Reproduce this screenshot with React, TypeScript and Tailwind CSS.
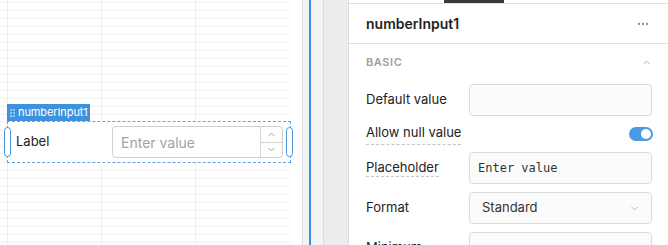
import { ChevronUp, ChevronDown, Ellipsis } from 'lucide-react';

const FONT = "font-['Inter','Noto_Sans',sans-serif]";

const DragDots = () => (
  <svg width="5" height="8" viewBox="0 0 5 8" className="shrink-0">
    {[1, 4, 7].map(y => [1, 4].map(x => <rect key={`${x}-${y}`} x={x - 0.75} y={y - 0.75} width="1.5" height="1.5" fill="white" opacity="0.85" />))}
  </svg>
);

const Handle = () => (
  <div className="w-[7px] h-[30px] rounded-full bg-white border border-[#4a97e0]" />
);

const Canvas = () => (
  <div className="relative w-[290px] h-full bg-[repeating-linear-gradient(180deg,#ffffff_0px,#ffffff_1px,#f6f6f6_1px,#f6f6f6_3px,#ffffff_3px,#ffffff_8px)]">
    <div className="flex h-full pl-[7px]">
      {[0, 1, 2].map(i => <div key={i} className="w-[94px] h-full border-l border-[#eeeeee]" />)}
    </div>
    {/* selected widget */}
    <div className="absolute left-[7px] top-[104px] w-[284px]">
      <div className="flex items-center gap-[3px] w-[83px] h-[17px] pl-[3px] bg-[#3f91dd] text-white text-[11px] leading-none">
        <DragDots />
        <span className="tracking-[-0.1px]">numberInput1</span>
      </div>
      <div className="relative h-[42px] bg-white border border-dashed border-[#5fa3e4] flex items-center">
        <div className="absolute -left-[4px] top-[5px]"><Handle /></div>
        <div className="absolute -right-[3px] top-[5px]"><Handle /></div>
        <span className="ml-[8px] w-[96px] text-[13px] text-[#222]">Label</span>
        <div className="flex h-[32px] w-[171px] rounded-[4px] border border-[#cfcfcf] bg-white overflow-hidden">
          <div className="flex-1 flex items-center pl-[8px] text-[14px] text-[#a3a3a3]">Enter value</div>
          <div className="w-[22px] border-l border-[#d6d6d6] flex flex-col">
            <div className="flex-1 flex items-center justify-center border-b border-[#d6d6d6]">
              <ChevronUp size={11} strokeWidth={1.75} color="#8a8a8a" />
            </div>
            <div className="flex-1 flex items-center justify-center">
              <ChevronDown size={11} strokeWidth={1.75} color="#8a8a8a" />
            </div>
          </div>
        </div>
      </div>
    </div>
  </div>
);

const Gutter = () => (
  <div className="flex h-full">
    <div className="w-[12px] bg-white" />
    <div className="w-[7px] bg-[#f3f3f3] border-l border-[#dedede]" />
    <div className="w-[2px] bg-[#3d8fdd]" />
    <div className="w-[12px] bg-[#f3f3f3]" />
    <div className="w-[26px] bg-[#ececec] border-x border-[#dcdcdc]" />
  </div>
);

const Row = ({ label, dashed, children }: { label: string; dashed?: boolean; children: React.ReactNode }) => (
  <div className="flex items-center">
    <div className="w-[103px] text-[13px] text-[#222]">
      <span className={dashed ? 'border-b border-dashed border-[#c4c4c4] pb-[1px]' : ''}>{label}</span>
    </div>
    <div className="flex-1">{children}</div>
  </div>
);

const Box = ({ children }: { children?: React.ReactNode }) => (
  <div className="h-[32px] rounded-[4px] border border-[#dcdcdc] bg-[#fbfbfb] flex items-center">{children}</div>
);

const Inspector = () => (
  <div className="flex-1 h-full bg-white overflow-hidden">
    <div className="h-[4px] border-b border-[#e2e2e2]">
      <div className="ml-[95px] w-[60px] h-[3px] bg-[#3a3a3a]" />
    </div>
    <div className="h-[40px] flex items-center justify-between pl-[17px] pr-[18px] border-b border-[#e0e0e0]">
      <span className="text-[14px] font-semibold text-[#1f1f1f]">numberInput1</span>
      <Ellipsis size={14} color="#8f8f8f" />
    </div>
    <div className="h-[37px] flex items-center justify-between pl-[17px] pr-[16px]">
      <span className="text-[11px] font-semibold tracking-[0.6px] text-[#a1a1a1]">BASIC</span>
      <ChevronUp size={11} strokeWidth={2} color="#a8a8a8" />
    </div>
    <div className="flex flex-col gap-[8px] pl-[17px] pr-[16px] pt-[3px]">
      <Row label="Default value"><Box /></Row>
      <div className="h-[20px] flex items-center justify-between">
        <span className="text-[13px] text-[#222] border-b border-dashed border-[#c4c4c4] pb-[1px]">Allow null value</span>
        <div className="w-[24px] h-[14px] rounded-full bg-[#4a9be6] flex items-center justify-end pr-[2px] mr-[-1px]">
          <div className="w-[10px] h-[10px] rounded-full bg-white" />
        </div>
      </div>
      <Row label="Placeholder" dashed>
        <Box><span className="pl-[8px] text-[12px] text-[#333] font-['DejaVu_Sans_Mono','Liberation_Mono',monospace]">Enter value</span></Box>
      </Row>
      <Row label="Format">
        <Box>
          <span className="flex-1 pl-[12px] text-[13px] text-[#333]">Standard</span>
          <ChevronDown size={11} strokeWidth={2} color="#b0b0b0" className="mr-[11px]" />
        </Box>
      </Row>
      <Row label="Minimum"><Box /></Row>
    </div>
  </div>
);

export default function App() {
  return (
    <div className={`${FONT} flex w-[668px] h-[245px] overflow-hidden bg-white`}>
      <Canvas />
      <Gutter />
      <Inspector />
    </div>
  );
}
